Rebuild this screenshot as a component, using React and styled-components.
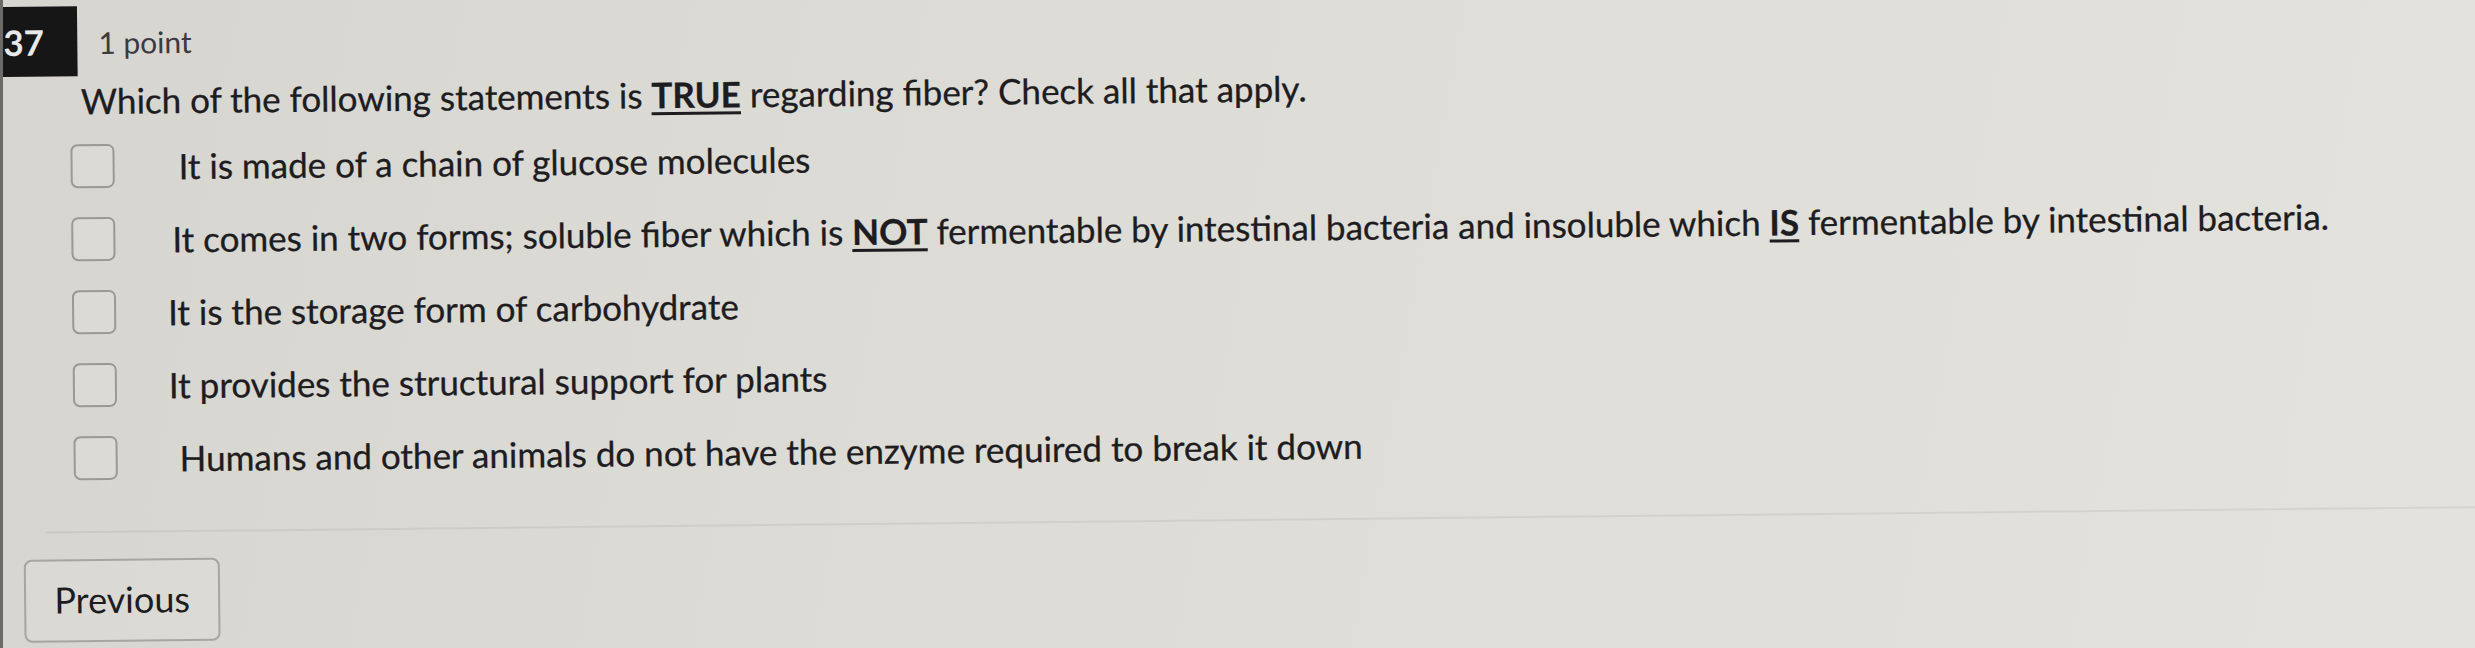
import React from "react";
import styled, { createGlobalStyle } from "styled-components";

const GlobalStyle = createGlobalStyle`
  html, body {
    margin: 0;
    padding: 0;
  }
  body {
    width: 2475px;
    height: 648px;
    overflow: hidden;
    font-family: Lato, "Open Sans", sans-serif;
    color: #1d1c21;
    background: linear-gradient(100deg, #d6d5d0 0%, #dcdbd6 35%, #e3e2dd 100%);
  }
`;

const App = () => {
  const options = [
    { text: "It is made of a chain of glucose molecules", indent: 64 },
    {
      text: (
        <>
          It comes in two forms; soluble fiber which is <Strong>NOT</Strong> fermentable by
          intestinal bacteria and insoluble which <Strong>IS</Strong> fermentable by intestinal
          bacteria.
        </>
      ),
      indent: 57,
    },
    { text: "It is the storage form of carbohydrate", indent: 52 },
    { text: "It provides the structural support for plants", indent: 52 },
    {
      text: "Humans and other animals do not have the enzyme required to break it down",
      indent: 62,
    },
  ];

  return (
    <Page>
      <GlobalStyle />
      <Sheet>
        <Header>
          <Badge>37</Badge>
          <Points>1 point</Points>
        </Header>
        <Question>
          Which of the following statements is <Strong>TRUE</Strong> regarding fiber? Check all
          that apply.
        </Question>
        <OptionList>
          {options.map((o, i) => (
            <Option key={i}>
              <Checkbox />
              <OptionText $indent={o.indent}>{o.text}</OptionText>
            </Option>
          ))}
        </OptionList>
        <Divider />
        <Footer>
          <PrevButton>Previous</PrevButton>
        </Footer>
      </Sheet>
    </Page>
  );
};

export default App;

const Page = styled.div`
  height: 648px;
  border-left: 3px solid #6b6a66;
  overflow: hidden;
`;

// the photo is taken slightly tilted, lines rise to the right
const Sheet = styled.div`
  display: flex;
  flex-direction: column;
  transform: rotate(-0.6deg);
  transform-origin: 0 300px;
`;

const Header = styled.div`
  display: flex;
  align-items: center;
  height: 77px;
  padding-top: 7px;
  box-sizing: border-box;
`;

const Badge = styled.div`
  display: flex;
  align-items: center;
  width: 74px;
  height: 70px;
  padding-left: 3px;
  background: #161616;
  color: #e9e9e9;
  font-size: 35px;
  font-weight: 700;
`;

const Points = styled.div`
  margin-left: 21px;
  margin-top: 2px;
  font-size: 30px;
  color: #3b3a3e;
`;

const Question = styled.div`
  margin: 4px 0 0 80px;
  font-size: 35px;
  line-height: 40px;
  white-space: nowrap;
  -webkit-text-stroke: 0.3px #1d1c21;
`;

const Strong = styled.span`
  font-weight: 700;
  text-decoration: underline;
  text-decoration-thickness: 3px;
  text-underline-offset: 4px;
`;

const OptionList = styled.div`
  display: flex;
  flex-direction: column;
  margin-top: 9px;
`;

const Option = styled.div`
  display: flex;
  align-items: center;
  height: 73px;
  padding-left: 69px;
`;

const Checkbox = styled.div`
  flex: none;
  width: 40px;
  height: 40px;
  border: 2px solid #9a9995;
  border-radius: 7px;
  background: rgba(255, 255, 255, 0.1);
`;

const OptionText = styled.div`
  margin-left: ${(p) => p.$indent}px;
  font-size: 35px;
  line-height: 40px;
  white-space: nowrap;
  -webkit-text-stroke: 0.3px #1d1c21;
`;

const Divider = styled.div`
  height: 2px;
  margin: 37px 0 0 40px;
  background: rgba(0, 0, 0, 0.06);
`;

const Footer = styled.div`
  display: flex;
  padding: 26px 0 0 18px;
`;

const PrevButton = styled.button`
  width: 196px;
  height: 83px;
  border: 2px solid #a6a5a1;
  border-radius: 8px;
  background: rgba(255, 255, 255, 0.08);
  font-family: Lato, "Open Sans", sans-serif;
  font-size: 36px;
  color: #1d1c21;
  padding: 0 0 4px;
`;
